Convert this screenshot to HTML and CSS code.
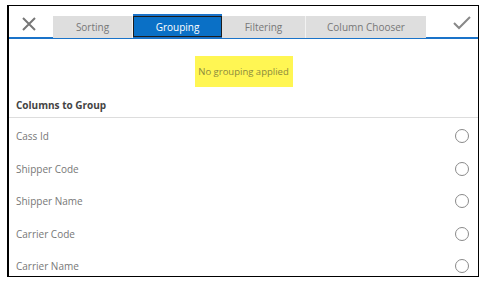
FILE: index.html
```html
<!DOCTYPE html>
<html lang="en">
<head>
    <meta charset="UTF-8">
    <title>Grid Settings</title>
    <link rel="stylesheet" href="styles.css">
</head>
<body>
    <div class="dialog">
        <div class="header">
            <button class="icon-btn close" aria-label="Close">
                <svg width="16" height="16" viewBox="0 0 16 16"><path d="M2 2 L14 14 M14 2 L2 14" stroke="#777" stroke-width="2" fill="none"/></svg>
            </button>
            <div class="tabs">
                <div class="tab tab-sorting">Sorting</div>
                <div class="tab tab-grouping active">Grouping</div>
                <div class="tab tab-filtering">Filtering</div>
                <div class="tab tab-chooser">Column Chooser</div>
            </div>
            <button class="icon-btn done" aria-label="Apply">
                <svg width="18" height="14" viewBox="0 0 18 14"><path d="M1 7 L6 12 L17 1" stroke="#888" stroke-width="2" fill="none"/></svg>
            </button>
        </div>

        <div class="notice-wrap">
            <div class="notice">No grouping applied</div>
        </div>

        <h3 class="section-title">Columns to Group</h3>

        <ul class="columns">
            <li><span>Cass Id</span><span class="radio"></span></li>
            <li><span>Shipper Code</span><span class="radio"></span></li>
            <li><span>Shipper Name</span><span class="radio"></span></li>
            <li><span>Carrier Code</span><span class="radio"></span></li>
            <li><span>Carrier Name</span><span class="radio"></span></li>
        </ul>
    </div>
</body>
</html>
```

FILE: styles.css
```css
body {
    margin: 0;
    background-color: #fff;
    font-family: "Open Sans", Arial, sans-serif;
}

.dialog {
    margin: 5px 0 0 7px;
    width: 472px;
    height: 272px;
    border: 1px solid #000;
    border-left-width: 2px;
    overflow: hidden;
    box-sizing: border-box;
}

.header {
    display: flex;
    align-items: flex-end;
    height: 31px;
    border-bottom: 2px solid #1a73c9;
}

.icon-btn {
    background: none;
    border: none;
    padding: 0;
    display: flex;
    align-items: center;
    justify-content: center;
    align-self: center;
    cursor: pointer;
}

.close {
    width: 27px;
    margin-left: 6px;
    margin-right: 11px;
    margin-top: 4px;
}

.done {
    width: 20px;
    margin-left: 26px;
    margin-top: 2px;
}

.tabs {
    display: flex;
    height: 22px;
    margin-bottom: -1px;
}

.tab {
    display: flex;
    align-items: center;
    justify-content: center;
    background-color: #dedede;
    color: #777;
    font-size: 10px;
    border-right: 1px solid #f2f2f2;
    box-sizing: border-box;
}

.tab-sorting { width: 80px; }
.tab-grouping { width: 89px; }
.tab-filtering { width: 84px; }
.tab-chooser { width: 120px; border-right: none; }

.tab.active {
    background-color: #0a70c6;
    color: #fff;
    border: 1px solid #1d1d1d;
    box-shadow: 0 -2px 0 #1a73c9;
    height: 21px;
    align-self: flex-end;
    margin-bottom: 1px;
}

.notice-wrap {
    display: flex;
    justify-content: center;
    padding-top: 17px;
}

.notice {
    background-color: #fff653;
    color: #8c8a3e;
    font-size: 9.5px;
    width: 98px;
    height: 31px;
    display: flex;
    align-items: center;
    justify-content: center;
}

.section-title {
    margin: 11px 0 0;
    padding: 0 0 5px 7px;
    font-size: 10px;
    font-weight: 700;
    color: #444;
    border-bottom: 1px solid #ddd;
}

.columns {
    list-style: none;
    margin: 0;
    padding: 2px 0 0;
}

.columns li {
    display: flex;
    justify-content: space-between;
    align-items: center;
    height: 32.5px;
    padding: 0 9px 0 7px;
    font-size: 10px;
    color: #777;
}

.radio {
    width: 12px;
    height: 12px;
    border: 1.5px solid #8a8a8a;
    border-radius: 50%;
}
```
